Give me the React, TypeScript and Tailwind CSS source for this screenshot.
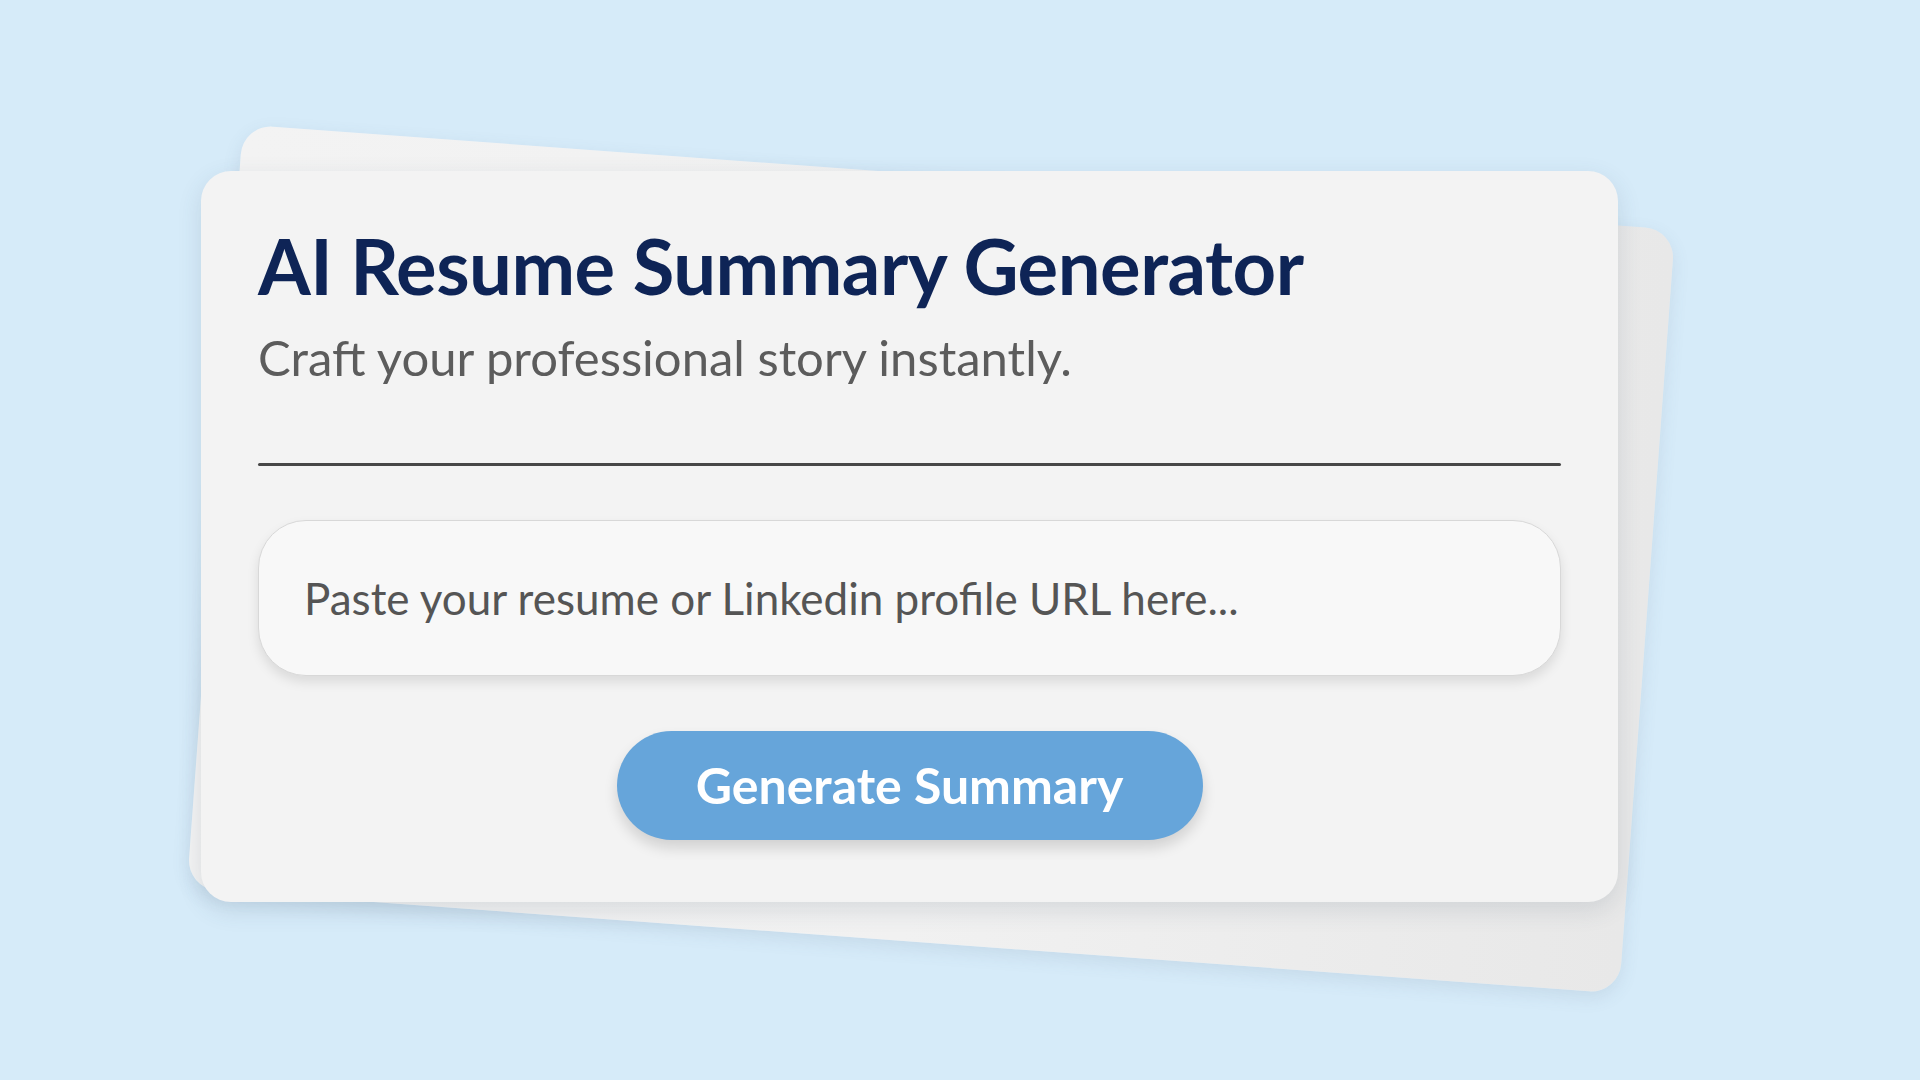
export default function App() {
  return (
    <div className="min-h-screen w-full overflow-hidden bg-[#d6ebf9] font-['Lato',sans-serif]">
      <div className="pl-[201px] pt-[171px]">
        <div className="relative h-[731px] w-[1417px]">
          {/* sheet lying behind the card */}
          <div className="absolute left-[12px] top-[5px] h-[766px] w-[1436px] rotate-[4.2deg] rounded-[30px] bg-gradient-to-r from-[#f3f3f3] via-[#f1f1f1] to-[#e8e8e8] shadow-[0_6px_18px_rgba(80,100,120,0.12)]" />

          {/* main card */}
          <div className="relative flex h-full w-full flex-col rounded-[30px] bg-[#f3f3f3] px-[57px] pt-[57px] shadow-[0_8px_24px_rgba(60,80,100,0.14)]">
            <h1 className="text-[76px] font-bold leading-none tracking-[-0.5px] text-[#0e2456]">
              AI Resume Summary Generator
            </h1>
            <p className="mt-[29px] text-[49px] leading-none text-[#5c5c5c]">
              Craft your professional story instantly.
            </p>

            <div className="mt-[81px] h-[3px] w-full rounded-full bg-[#474747]" />

            <div className="mt-[54px] flex h-[156px] items-center rounded-[48px] border border-[#d8d8d8] bg-[#f8f8f8] pl-[45px] shadow-[0_6px_12px_rgba(0,0,0,0.10)]">
              <span className="text-[44px] text-[#555555]">
                Paste your resume or Linkedin profile URL here...
              </span>
            </div>

            <div className="mt-[55px] flex justify-center">
              <button
                type="button"
                className="flex h-[109px] w-[586px] items-center justify-center rounded-full bg-[#66a5da] text-[50px] font-bold text-white shadow-[0_8px_14px_rgba(0,0,0,0.14)]"
              >
                Generate Summary
              </button>
            </div>
          </div>
        </div>
      </div>
    </div>
  );
}
